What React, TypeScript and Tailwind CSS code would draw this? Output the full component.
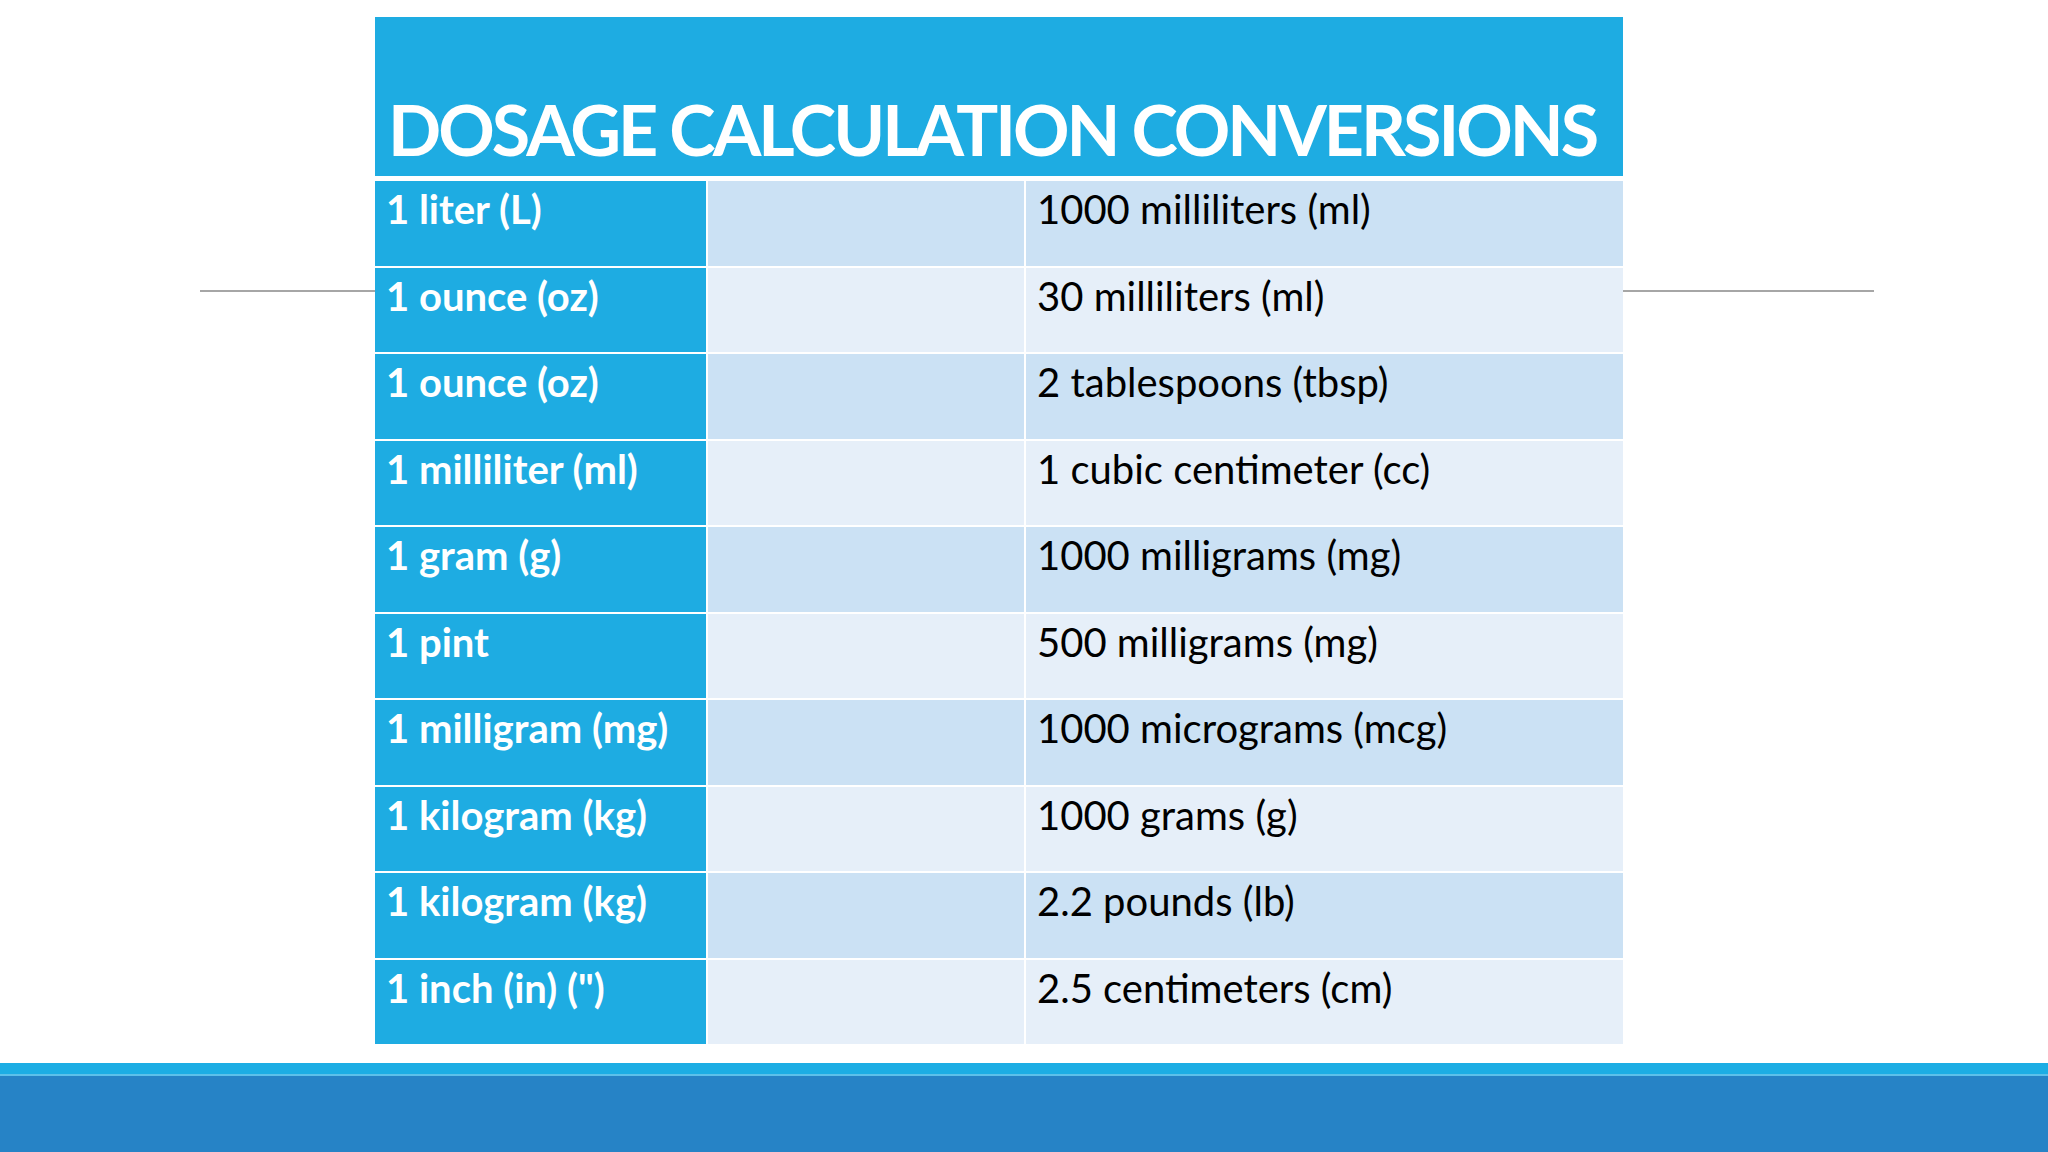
import React from "react";

const rows: [string, string][] = [
  ["1 liter (L)", "1000 milliliters (ml)"],
  ["1 ounce (oz)", "30 milliliters (ml)"],
  ["1 ounce (oz)", "2 tablespoons (tbsp)"],
  ["1 milliliter (ml)", "1 cubic centimeter (cc)"],
  ["1 gram (g)", "1000 milligrams (mg)"],
  ["1 pint", "500 milligrams (mg)"],
  ["1 milligram (mg)", "1000 micrograms (mcg)"],
  ["1 kilogram (kg)", "1000 grams (g)"],
  ["1 kilogram (kg)", "2.2 pounds (lb)"],
  ['1 inch (in) (")', "2.5 centimeters (cm)"],
];

export default function App() {
  return (
    <div
      className="w-[2048px] h-[1152px] bg-white flex flex-col overflow-hidden"
      style={{ fontFamily: "Lato, 'Open Sans', sans-serif" }}
    >
      <div className="flex-1 flex flex-row pt-[17px] pl-[200px]">
        <div className="w-[175px] h-[2px] bg-[#a6a6a6] mt-[273px]" />
        <div className="w-[1248px] flex flex-col">
          <div className="h-[159px] bg-[#1eace2] flex items-end px-[13px] pb-[12px]">
            <div className="text-white font-bold text-[70px] leading-none whitespace-nowrap tracking-[-3px]">
              DOSAGE CALCULATION CONVERSIONS
            </div>
          </div>
          <div className="flex flex-col gap-[2px] mt-[5px]">
            {rows.map(([a, b], i) => (
              <div key={i} className="flex flex-row gap-[2px] h-[84.5px]">
                <div className="w-[331px] bg-[#1eace2] text-white font-bold text-[40px] leading-none pl-[11px] pt-[8px] whitespace-nowrap">
                  {a}
                </div>
                <div
                  className={
                    "w-[316px] " + (i % 2 === 0 ? "bg-[#cbe1f4]" : "bg-[#e6eff9]")
                  }
                />
                <div
                  className={
                    "flex-1 text-black text-[40px] leading-none pl-[11px] pt-[8px] whitespace-nowrap " +
                    (i % 2 === 0 ? "bg-[#cbe1f4]" : "bg-[#e6eff9]")
                  }
                >
                  {b}
                </div>
              </div>
            ))}
          </div>
        </div>
        <div className="w-[251px] h-[2px] bg-[#a6a6a6] mt-[273px]" />
      </div>
      <div className="h-[89px] flex flex-col">
        <div className="h-[11px] bg-[#1cade4]" />
        <div className="h-[2px] bg-[#5cc0ea]" />
        <div className="flex-1 bg-[#2683c6]" />
      </div>
    </div>
  );
}
